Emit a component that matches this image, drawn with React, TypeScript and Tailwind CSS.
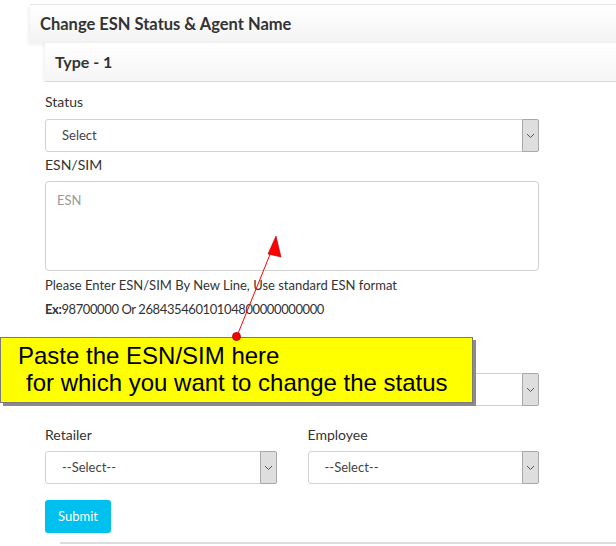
import React from "react";

function Chevron() {
  return (
    <svg width="9" height="6" viewBox="0 0 9 6" className="block">
      <polyline points="1,1 4.5,4.5 8,1" fill="none" stroke="#555" strokeWidth="1" />
    </svg>
  );
}

function FakeSelect({ text, className }: { text: string; className?: string }) {
  return (
    <div
      className={
        "flex h-[33px] items-stretch rounded-[3px] border border-[#d2d2d2] bg-white " +
        (className ?? "")
      }
    >
      <div className="flex flex-1 items-center pl-[16px] text-[13px] text-[#444]">{text}</div>
      <div className="flex w-[17px] items-center justify-center rounded-r-[2px] border border-[#a9a9a9] bg-[#dedede] -my-px -mr-px">
        <Chevron />
      </div>
    </div>
  );
}

export default function App() {
  return (
    <div
      className="relative h-[546px] w-[616px] overflow-hidden bg-white text-[#333]"
      style={{ fontFamily: "Lato, 'Open Sans', sans-serif" }}
    >
      <div className="pl-[30px] pt-[4px]">
        <div className="flex h-[39px] items-center border-t border-[#e6e6e6] bg-gradient-to-b from-white to-[#f3f3f3] pl-[10px] text-[16.5px] font-bold text-[#333] shadow-[-2px_2px_3px_rgba(0,0,0,0.06)]">
          Change ESN Status &amp; Agent Name
        </div>
        <div className="ml-[15px] flex h-[39px] items-center border-b border-[#dadada] bg-gradient-to-b from-white to-[#f5f5f5] pl-[10px] text-[16px] font-bold text-[#333] shadow-[-2px_0_3px_rgba(0,0,0,0.05)]">
          Type - 1
        </div>
      </div>

      <div className="w-[539px] pl-[45px]">
        <div className="mt-[10px] text-[14px] leading-[20px]">Status</div>
        <FakeSelect text="Select" className="mt-[7px]" />
        <div className="mt-[3px] text-[14px] leading-[20px]">ESN/SIM</div>
        <div className="mt-[6px] h-[90px] rounded-[4px] border border-[#d2d2d2] bg-white pl-[11px] pt-[9px] text-[13px] text-[#999]">
          ESN
        </div>
        <div className="mt-[5px] text-[13px] leading-[18px]">
          Please Enter ESN/SIM By New Line, Use standard ESN format
        </div>
        <div className="mt-[6px] text-[13px] leading-[18px] tracking-[-0.4px]">
          <span className="font-bold">Ex:</span>98700000 Or 26843546010104800000000000
        </div>

        <div className="mt-[28px] grid grid-cols-2 gap-x-[31px]">
          <div>
            <div className="text-[14px] leading-[20px]">Agent</div>
            <FakeSelect text="--Select--" className="mt-[7px]" />
          </div>
          <div>
            <div className="text-[14px] leading-[20px]">Sub Agent</div>
            <FakeSelect text="--Select--" className="mt-[7px]" />
          </div>
        </div>

        <div className="mt-[19px] grid grid-cols-2 gap-x-[31px]">
          <div>
            <div className="text-[14px] leading-[20px]">Retailer</div>
            <FakeSelect text="--Select--" className="mt-[6px]" />
          </div>
          <div>
            <div className="text-[14px] leading-[20px]">Employee</div>
            <FakeSelect text="--Select--" className="mt-[6px]" />
          </div>
        </div>

        <button className="mt-[16px] flex h-[33px] w-[66px] items-center justify-center rounded-[3px] bg-[#00c0ef] text-[13px] text-white">
          Submit
        </button>
      </div>

      <div className="ml-[60px] mt-[9px] h-[3px] border-t-2 border-[#dcdcdc]" />

      {/* Callout annotation */}
      <div
        className="absolute left-0 top-[337px] h-[66px] w-[473px] border border-[#7a7a7a] bg-[#ffff00] pl-[17px] pt-[4px] text-[24px] leading-[27px] text-black shadow-[3px_3px_0_#8a8a8a]"
        style={{ fontFamily: "'Liberation Sans', Arial, sans-serif" }}
      >
        <div>Paste the ESN/SIM here</div>
        <div className="pl-[8px]">for which you want to change the status</div>
      </div>

      {/* Arrow annotation */}
      <svg className="pointer-events-none absolute left-0 top-0" width="616" height="546">
        <line x1="237" y1="336" x2="271" y2="252" stroke="#ff0000" strokeWidth="1" />
        <polygon points="276,236 268,254 281,257" fill="#ff0000" stroke="#b00000" strokeWidth="0.6" />
        <circle cx="236.5" cy="336.5" r="4" fill="#ff0000" stroke="#a00000" strokeWidth="0.8" />
      </svg>
    </div>
  );
}
